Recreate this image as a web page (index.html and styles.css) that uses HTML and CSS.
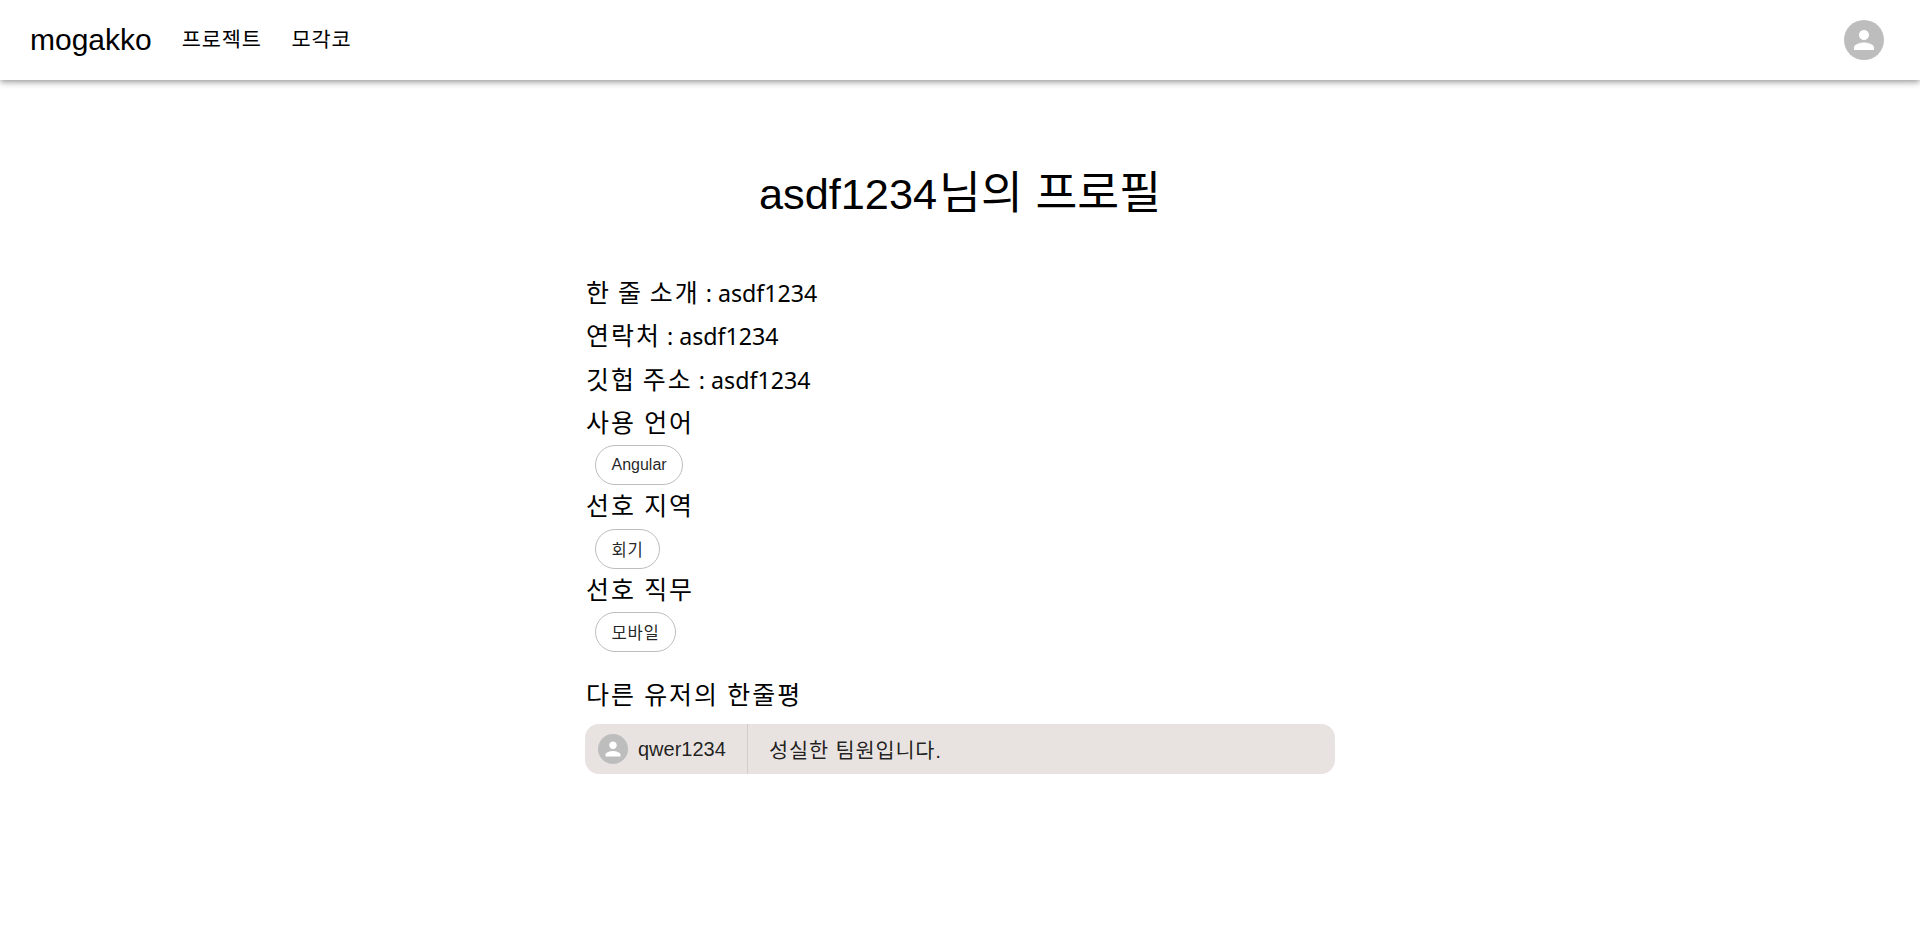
FILE: index.html
```html
<!DOCTYPE html>
<html lang="ko">
<head>
<meta charset="utf-8">
<title>mogakko</title>
<link rel="stylesheet" href="styles.css">
</head>
<body>
<header class="appbar">
  <div class="logo">mogakko</div>
  <nav class="nav"><a class="ko">프로젝트</a><a class="ko">모각코</a></nav>
  <div class="grow"></div>
  <svg class="avatar big" viewBox="0 0 32 32"><circle cx="16" cy="16" r="16" fill="#bdbdbd"/><path transform="translate(4 4)" fill="#fff" d="M12 12c2.210 0 4-1.790 4-4s-1.790-4-4-4-4 1.790-4 4 1.790 4 4 4zm0 2c-2.670 0-8 1.340-8 4v2h16v-2c0-2.660-5.330-4-8-4z"/></svg>
</header>
<main class="main">
  <h1 class="title">asdf1234<span class="title-ko">님의 프로필</span></h1>
  <section class="profile">
    <div class="line field"><span class="ko">한 줄 소개</span><span class="value"> : asdf1234</span></div>
    <div class="line field"><span class="ko">연락처</span><span class="value"> : asdf1234</span></div>
    <div class="line field"><span class="ko">깃헙 주소</span><span class="value"> : asdf1234</span></div>
    <div class="line"><span class="ko">사용 언어</span></div>
    <div class="chips"><span class="chip">Angular</span></div>
    <div class="line"><span class="ko">선호 지역</span></div>
    <div class="chips"><span class="chip"><span class="ko">회기</span></span></div>
    <div class="line"><span class="ko">선호 직무</span></div>
    <div class="chips"><span class="chip"><span class="ko">모바일</span></span></div>
    <div class="line review-title"><span class="ko">다른 유저의 한줄평</span></div>
    <div class="review">
      <div class="reviewer">
        <svg class="avatar small" viewBox="0 0 32 32"><circle cx="16" cy="16" r="16" fill="#bdbdbd"/><path transform="translate(4 4)" fill="#fff" d="M12 12c2.210 0 4-1.790 4-4s-1.790-4-4-4-4 1.790-4 4 1.790 4 4 4zm0 2c-2.670 0-8 1.340-8 4v2h16v-2c0-2.660-5.330-4-8-4z"/></svg>
        <span class="reviewer-name">qwer1234</span>
      </div>
      <div class="comment ko">성실한 팀원입니다.</div>
    </div>
  </section>
</main>
</body>
</html>
```
FILE: styles.css
```css
* { box-sizing: border-box; }
body { margin: 0; background: #fff; color: #000; font-family: "Liberation Sans", "Noto Sans CJK KR", sans-serif; }
.ko { font-size: 1.04em; letter-spacing: .04em; }
.appbar { display: flex; align-items: center; height: 80px; padding: 0 36px 0 30px; background: #fff; box-shadow: 0 2px 4px -1px rgba(0,0,0,.2), 0 4px 5px 0 rgba(0,0,0,.14), 0 1px 10px 0 rgba(0,0,0,.12); }
.logo { font-size: 30px; }
.nav { display: flex; gap: 30px; margin-left: 30px; margin-bottom: 5px; font-size: 20px; }
.nav .ko { font-size: 20.8px; }
.grow { flex: 1; }
.avatar { display: block; flex: none; }
.big { width: 40px; height: 40px; }
.main { width: 750px; margin: 0 auto; padding-top: 84px; }
.title { margin: 0 0 48px; font-size: 43.3px; font-weight: 400; text-align: center; line-height: 60px; }
.title-ko { font-size: 45.5px; margin-left: 2px; }
.profile { font-size: 24px; }
.value { font-family: "Noto Sans", "Liberation Sans", sans-serif; font-size: 23.2px; }
.line { line-height: 43.3px; padding-left: 1px; }
.line .ko { letter-spacing: 2px; word-spacing: -.7px; }
.field .ko { word-spacing: -2px; }
.chips { padding-left: 10px; height: 40.2px; }
.chip { display: inline-flex; align-items: center; height: 40px; padding: 0 15.5px; border: 1px solid #bdbdbd; border-radius: 20px; font-size: 16px; color: rgba(0,0,0,.87); }
.review-title { margin-top: 22px; }
.review { display: flex; align-items: stretch; height: 50px; margin-top: 6px; background: #e8e3e0; border-radius: 14px; font-size: 20px; color: rgba(0,0,0,.87); }
.reviewer { display: flex; align-items: center; gap: 10px; width: 163px; padding-left: 13px; border-right: 1px solid #d2cdca; }
.reviewer-name { padding-top: 2px; }
.small { width: 30px; height: 30px; }
.comment { display: flex; align-items: center; padding-left: 21px; }
```
